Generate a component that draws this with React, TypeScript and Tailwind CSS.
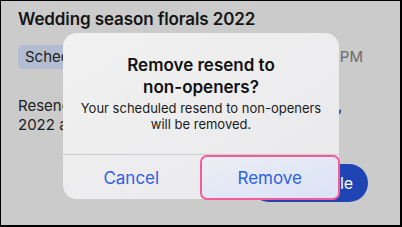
import React from "react";

export default function App() {
  return (
    <div
      className="relative w-[402px] h-[227px] overflow-hidden bg-[#cbcbcb] border-l border-t border-r-2 border-b-2 border-black"
      style={{ fontFamily: "Inter, 'Noto Sans', sans-serif" }}
    >
      <div className="pl-[17px] pt-[7px]" aria-hidden="true">
        <h1 className="text-[17px] leading-[22px] font-semibold text-[#141414] tracking-[-0.1px]">
          Wedding season florals 2022
        </h1>
        <div className="mt-[15px] flex items-center pr-[37px]">
          <span className="h-[24px] px-[7px] rounded-[5px] bg-[#b2bdd2] text-[15px] leading-[24px] text-[#1d1d1f]">
            Scheduled
          </span>
          <span className="ml-auto text-[15px] leading-[24px] text-[#6a6a6a]">
            Sep 14, 2022 at 4:00 PM
          </span>
        </div>
        <p className="mt-[27px] text-[15px] leading-[19px] text-[#1d1d1f]">
          <span className="block whitespace-nowrap">Resend to non-openers scheduled for Sep 14,</span>
          <span className="block whitespace-nowrap">2022 at 4:00 PM.</span>
        </p>
        <div className="mt-[30px] flex justify-end pr-[32px]">
          <button className="h-[38px] w-[118px] rounded-full bg-[#1f44b4] text-white text-[16px] flex items-center justify-center">
            Reschedule
          </button>
        </div>
      </div>

      <div className="absolute left-[62px] top-[32px] w-[276px] h-[166px] rounded-[14px] bg-gradient-to-br from-[#f1f1f1] to-[#e9e9ec] flex flex-col">
        <div className="pt-[21px] px-[16px] text-center">
          <h2 className="text-[17px] leading-[22px] font-semibold text-[#111]">
            Remove resend to
            <br />
            non-openers?
          </h2>
          <p className="mt-[2px] text-[13px] leading-[16px] text-[#1a1a1a]">
            Your scheduled resend to non-openers
            <br />
            will be removed.
          </p>
        </div>
        <div className="mt-auto border-t border-[#cdcdd0] flex h-[45px]">
          <button className="flex-1 pt-[3px] text-[17px] text-[#2d5fe3] flex items-center justify-center">
            Cancel
          </button>
          <button className="flex-1 -mr-px -mb-px pt-[3px] rounded-[7px] border-2 border-[#f25d98] bg-gradient-to-br from-[#eceef4] to-[#dbe2f7] text-[17px] text-[#2d5fe3] flex items-center justify-center">
            Remove
          </button>
        </div>
      </div>
    </div>
  );
}
